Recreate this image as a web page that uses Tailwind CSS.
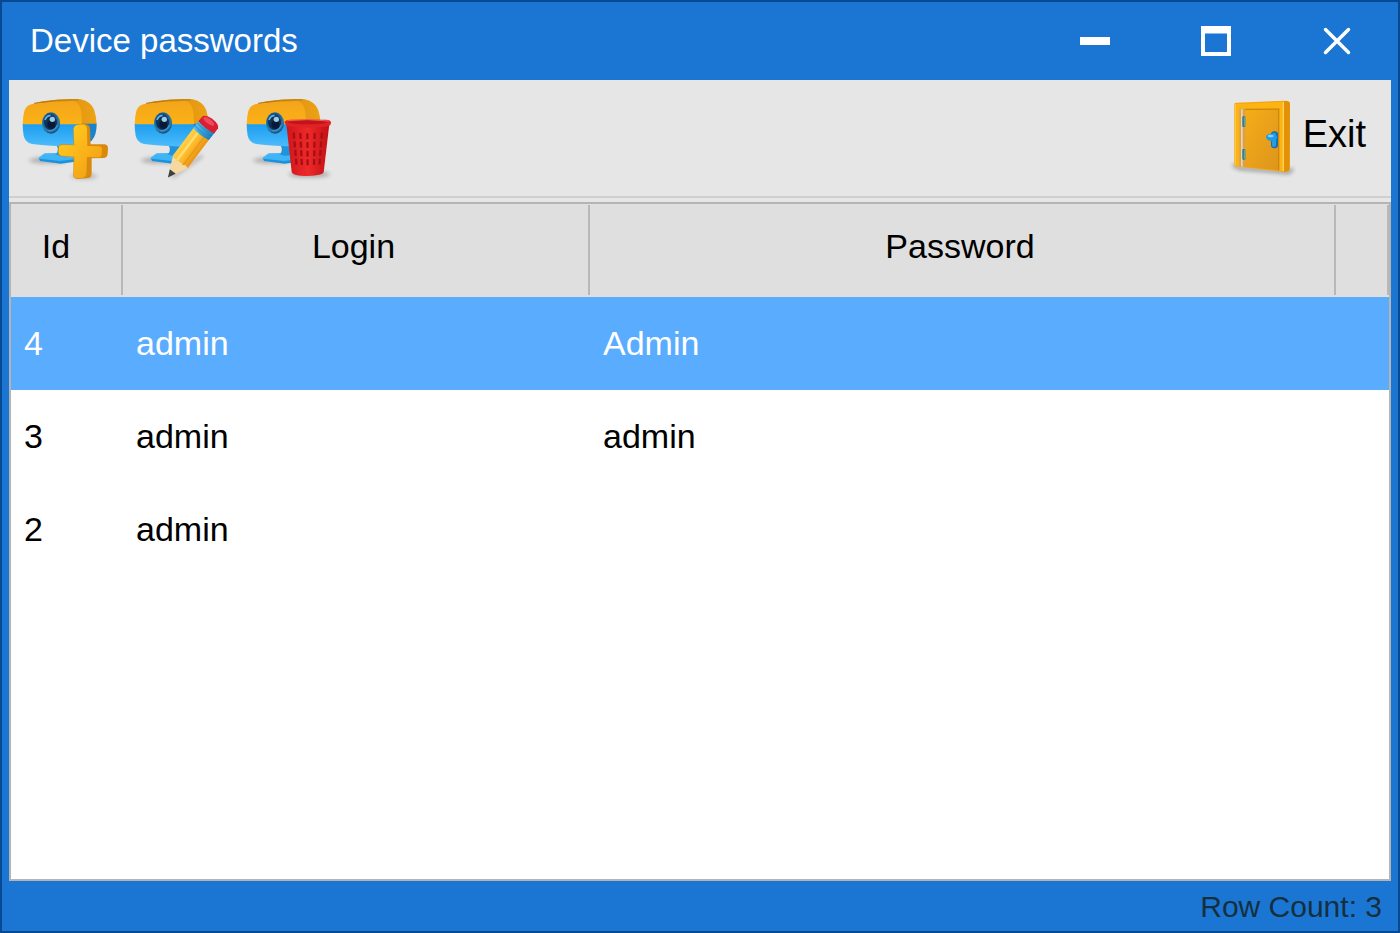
<!DOCTYPE html>
<html lang="en">
  <head>
    <meta charset="UTF-8" />
    <meta name="viewport" content="width=device-width, initial-scale=1.0" />
    <title>Device passwords</title>
    <script src="https://cdn.jsdelivr.net/npm/@tailwindcss/browser@4"></script>
  </head>
  <body class="font-['Liberation_Sans',Arial,sans-serif] text-black">
    <!-- Shared gradients and the camera symbol -->
    <svg class="absolute size-0" aria-hidden="true">
      <defs>
        <linearGradient id="camTop" x1="0" y1="0" x2="0" y2="1">
          <stop offset="0" stop-color="#f3a51a" />
          <stop offset="1" stop-color="#fbb216" />
        </linearGradient>
        <linearGradient id="camBottom" x1="0" y1="0" x2="0" y2="1">
          <stop offset="0" stop-color="#1b9df0" />
          <stop offset="1" stop-color="#4cbcfb" />
        </linearGradient>
        <linearGradient id="camSide" x1="0" y1="0" x2="1" y2="0">
          <stop offset="0" stop-color="#c98208" />
          <stop offset="1" stop-color="#eda315" />
        </linearGradient>
        <radialGradient id="lens" cx="0.45" cy="0.4" r="0.6">
          <stop offset="0" stop-color="#0b1f3d" />
          <stop offset="0.5" stop-color="#12467c" />
          <stop offset="0.8" stop-color="#2c7fae" />
          <stop offset="1" stop-color="#17446e" />
        </radialGradient>
        <linearGradient id="plus" x1="0" y1="0" x2="1" y2="1">
          <stop offset="0" stop-color="#ffd21f" />
          <stop offset="0.5" stop-color="#fbb51a" />
          <stop offset="1" stop-color="#f09a12" />
        </linearGradient>
        <linearGradient id="bin" x1="0" y1="0" x2="1" y2="0">
          <stop offset="0" stop-color="#d01519" />
          <stop offset="0.5" stop-color="#ee2a2a" />
          <stop offset="1" stop-color="#c40e14" />
        </linearGradient>
        <linearGradient id="pencil" x1="0" y1="0" x2="1" y2="0">
          <stop offset="0" stop-color="#ffcf45" />
          <stop offset="0.5" stop-color="#fdbb2b" />
          <stop offset="1" stop-color="#ea9412" />
        </linearGradient>
        <linearGradient id="band" x1="0" y1="0" x2="1" y2="0">
          <stop offset="0" stop-color="#5cc3f0" />
          <stop offset="1" stop-color="#1779b4" />
        </linearGradient>
        <linearGradient id="door" x1="0" y1="0" x2="1" y2="1">
          <stop offset="0" stop-color="#f6ac18" />
          <stop offset="1" stop-color="#dd951c" />
        </linearGradient>
        <filter id="soft" x="-30%" y="-80%" width="160%" height="260%">
          <feGaussianBlur stdDeviation="6" />
        </filter>
        <symbol id="camera" viewBox="0 0 330 330">
          <ellipse cx="115" cy="226" rx="58" ry="9" fill="#000" opacity=".25" filter="url(#soft)" />
          <path d="M104 205 L190 203 L200 224 L160 234 L90 226 Q82 222 88 217 Z" fill="#3fb4f6" />
          <path d="M88 221 L150 228 L200 222 L196 230 L152 236 L90 228 Z" fill="#1c90da" />
          <path d="M136 178 L190 178 Q174 190 176 200 Q178 212 150 212 L138 208 Q150 192 136 178 Z" fill="#1f93dc" />
          <path d="M70 56 Q84 50 110 47 Q160 40 212 43 Q244 50 253 76 Q259 96 260 118 L206 118 L186 50 Z" fill="url(#camSide)" />
          <path d="M206 116 L260 116 Q260 150 246 166 Q230 180 192 184 Z" fill="#1b83ca" />
          <path d="M66 57 Q130 48 192 48 Q209 54 213 76 Q216 98 216 119 L38 119 Q38 96 43 78 Q48 61 66 57 Z" fill="url(#camTop)" />
          <path d="M38 118 L216 118 Q216 150 210 170 Q205 184 190 185 Q120 184 66 177 Q46 172 41 152 Q38 136 38 118 Z" fill="url(#camBottom)" />
          <path d="M72 55 Q140 43 206 44" fill="none" stroke="#b97d16" stroke-width="3" />
          <ellipse cx="123" cy="114" rx="27" ry="32" fill="url(#lens)" />
          <ellipse cx="122" cy="113" rx="19" ry="22" fill="#103258" />
          <ellipse cx="124" cy="119" rx="12" ry="13" fill="#081a36" />
          <path d="M105 105 Q110 91 122 92" fill="none" stroke="#5cb5da" stroke-width="5" />
          <circle cx="127" cy="103" r="8" fill="#9ccbe8" />
          <path d="M115 137 Q136 138 142 120" fill="none" stroke="#3c94c8" stroke-width="4" />
        </symbol>
      </defs>
    </svg>

    <div class="flex flex-col h-screen bg-[#1b76d3] border-2 border-[#074a92]">
      <!-- Title bar -->
      <header class="flex items-center justify-between h-[78px] shrink-0 pl-7 pr-px text-[33px] text-white">
        <h1>Device passwords</h1>
        <div class="flex h-full">
          <button type="button" aria-label="Minimize" class="flex items-center justify-center w-[121px]">
            <svg class="size-8" viewBox="0 0 32 32"><path d="M1 12h30v8H1z" fill="#fff" /></svg>
          </button>
          <button type="button" aria-label="Maximize" class="flex items-center justify-center w-[121px]">
            <svg class="size-8" viewBox="0 0 32 32"><path fill-rule="evenodd" d="M1 1h30v30H1zM5 8.500v18.500h22V8.500z" fill="#fff" /></svg>
          </button>
          <button type="button" aria-label="Close" class="flex items-center justify-center w-[121px]">
            <svg class="size-8" viewBox="0 0 32 32"><path d="M4.500 4.500l23 23M27.500 4.500l-23 23" stroke="#fff" stroke-width="3.500" stroke-linecap="round" /></svg>
          </button>
        </div>
      </header>

      <main class="flex flex-col flex-1 min-h-0 mx-[7px] bg-[#e6e6e6]">
        <!-- Toolbar -->
        <div class="flex items-center justify-between h-[118px] shrink-0 mb-1 pt-1 pr-[25px] border-b-2 border-[#cfcfcf]">
          <div class="flex gap-[2px] pl-px">
            <button type="button" aria-label="Add" class="size-[110px]">
              <svg class="size-[110px]" viewBox="0 0 330 330">
                <use href="#camera" />
                <ellipse cx="222" cy="274" rx="40" ry="7" fill="#000" opacity=".25" filter="url(#soft)" />
                <path d="M200 120 Q216 113 233 119 Q240 122 240 132 L242 178 L284 178 Q294 180 294 190 L293 207 Q292 217 282 219 L245 220 L245 268 Q244 277 236 279 L202 282 Q190 279 190 270 L191 217 L155 214 Q143 211 144 201 L145 186 Q146 178 156 178 L191 179 L190 130 Q191 123 200 120 Z" fill="#d98a0c" />
                <path d="M199 121 Q210 117 224 119 Q231 122 231 130 L232 183 L270 184 Q277 186 276 194 L275 210 Q274 217 266 217 L231 216 L229 267 Q228 276 220 278 L202 280 Q191 278 192 269 L193 215 L156 212 Q145 209 146 200 L147 187 Q148 180 157 180 L193 181 L191 131 Q192 124 199 121 Z" fill="url(#plus)" />
              </svg>
            </button>
            <button type="button" aria-label="Edit" class="size-[110px]">
              <svg class="size-[110px]" viewBox="0 0 330 330">
                <use href="#camera" />
                <path d="M150 276 L240 212" stroke="#000" stroke-width="9" opacity=".25" filter="url(#soft)" />
                <g transform="translate(139 276) rotate(37) scale(1.16 .93)">
                  <path d="M-23 -62 L0 2 L27 -62 Z" fill="#f6d9a2" />
                  <path d="M-9 -23 L0 2 L10 -23 Z" fill="#3b3f48" />
                  <path d="M-24 -60 L-24 -178 L26 -178 L26 -60 Q17 -68 10 -58 Q1 -68 -8 -57 Q-16 -67 -24 -60 Z" fill="url(#pencil)" />
                  <path d="M-8 -60 L-8 -178" stroke="#ffdc70" stroke-width="6" />
                  <path d="M12 -60 L12 -178" stroke="#e6941a" stroke-width="3" />
                  <path d="M-24 -174 L-25 -205 L27 -205 L26 -174 Q0 -167 -24 -174 Z" fill="url(#band)" />
                  <path d="M-24 -184 Q0 -177 26 -184M-24 -196 Q0 -189 26 -196" fill="none" stroke="#2a8fc8" stroke-width="3" />
                  <path d="M-25 -202 L-24 -222 Q-21 -234 0 -235 Q24 -234 27 -222 L27 -202 Q2 -195 -25 -202 Z" fill="#d91f30" />
                  <ellipse cx="-3" cy="-222" rx="17" ry="8" fill="#ee4a5e" />
                </g>
              </svg>
            </button>
            <button type="button" aria-label="Delete" class="size-[110px]">
              <svg class="size-[110px]" viewBox="0 0 330 330">
                <use href="#camera" />
                <ellipse cx="226" cy="268" rx="62" ry="9" fill="#000" opacity=".28" filter="url(#soft)" />
                <path d="M157 117 L173 260 Q176 273 222 273 Q266 272 269 262 L286 117 Z" fill="url(#bin)" />
                <g fill="none" stroke="#a51015" stroke-width="7" stroke-dasharray="18 8">
                  <path d="M179 143 L188 244" />
                  <path d="M199 144 L204 248" />
                  <path d="M220 145 L221 249" />
                  <path d="M242 144 L240 248" />
                  <path d="M264 143 L256 244" />
                </g>
                <path d="M152 112 Q152 104 170 104 L276 104 Q292 105 291 114 Q290 122 283 124 Q220 132 162 123 Q153 120 152 112 Z" fill="#e02226" />
                <ellipse cx="221" cy="112" rx="60" ry="6" fill="#c1151a" />
                <path d="M160 107 Q220 100 284 108" fill="none" stroke="#f0585a" stroke-width="3" />
              </svg>
            </button>
          </div>
          <button type="button" class="flex items-center text-[38px]">
            <svg class="w-[83px] h-[110px]" viewBox="0 0 249 330" aria-hidden="true">
              <path d="M38 240 L60 250 L205 262 L218 252" fill="none" stroke="#000" stroke-width="9" opacity=".4" filter="url(#soft)" />
              <path d="M43 57 Q44 53 50 53 L198 47 Q209 48 210 56 L209 252 Q208 259 198 261 L187 260 L43 244 Z" fill="#f6a50e" />
              <path d="M192 49 L202 48 Q210 50 210 57 L209 252 Q208 259 192 261 Z" fill="#e39208" />
              <path d="M45 57 L188 51 L189 259 L178 257 L178 72 L63 73 L63 245 L45 243 Z" fill="#fcb412" />
              <path d="M58 71 L76 71 L76 246 L58 244 Z" fill="#d3a15c" />
              <path d="M63 73 L68 73 L68 245 L63 244 Z" fill="#f2d4a0" />
              <path d="M76 73 L178 72 L178 256 L76 246 Z" fill="url(#door)" />
              <path d="M76 73 L178 72" stroke="#bd7d0b" stroke-width="3" />
              <path d="M176 73 L176 256" stroke="#c9840f" stroke-width="3" />
              <path d="M190 51 L190 258" stroke="#ffd35a" stroke-width="4" />
              <path d="M46 58 L46 242" stroke="#ffc944" stroke-width="3" />
              <rect x="67" y="94" width="9" height="32" rx="3" fill="#28798b" />
              <rect x="67" y="192" width="9" height="32" rx="3" fill="#28798b" />
              <path d="M73 96v28M73 194v28" stroke="#51b6c9" stroke-width="3" />
              <rect x="153" y="139" width="21" height="51" rx="10" fill="#176fae" />
              <rect x="156" y="143" width="12" height="43" rx="6" fill="#2b9ce0" />
              <path d="M140 151 Q145 144 157 147 L169 151 Q174 158 167 165 Q155 172 142 164 Q136 158 140 151 Z" fill="#209be8" />
              <ellipse cx="152" cy="153" rx="9" ry="4" fill="#7ed3ff" />
            </svg>
            <span class="pb-3">Exit</span>
          </button>
        </div>

        <!-- Password list -->
        <div class="flex-1 min-h-0 bg-white border-2 border-[#b4b4b4]">
          <table class="w-full table-fixed text-left text-[34px]">
            <colgroup>
              <col class="w-[112px]" />
              <col class="w-[467px]" />
              <col />
              <col class="w-[53px]" />
            </colgroup>
            <thead class="bg-[#dfdfdf]">
              <tr>
                <th class="pt-px pb-[2px] font-normal"><div class="flex items-center justify-center h-[90px] pr-5 pb-2 border-r-2 border-[#b8b8b8]">Id</div></th>
                <th class="pt-px pb-[2px] font-normal"><div class="flex items-center justify-center h-[90px] pr-1 pb-2 border-r-2 border-[#b8b8b8]">Login</div></th>
                <th class="pt-px pb-[2px] font-normal"><div class="flex items-center justify-center h-[90px] pr-1 pb-2 border-r-2 border-[#b8b8b8]">Password</div></th>
                <td class="pt-px pb-[2px]"><div class="h-[90px] border-r-2 border-[#b8b8b8]"></div></td>
              </tr>
            </thead>
            <tbody>
              <tr class="h-[93px] bg-[#5aacff] text-white">
                <td class="pl-[13px]">4</td>
                <td class="pl-[13px]">admin</td>
                <td class="pl-[13px]">Admin</td>
                <td></td>
              </tr>
              <tr class="h-[93px]">
                <td class="pl-[13px]">3</td>
                <td class="pl-[13px]">admin</td>
                <td class="pl-[13px]">admin</td>
                <td></td>
              </tr>
              <tr class="h-[93px]">
                <td class="pl-[13px]">2</td>
                <td class="pl-[13px]">admin</td>
                <td></td>
                <td></td>
              </tr>
            </tbody>
          </table>
        </div>
      </main>

      <!-- Status bar -->
      <footer class="flex items-center justify-end h-[50px] shrink-0 pr-4 text-[30px] text-[#14303f]">
        Row Count: 3
      </footer>
    </div>
  </body>
</html>
